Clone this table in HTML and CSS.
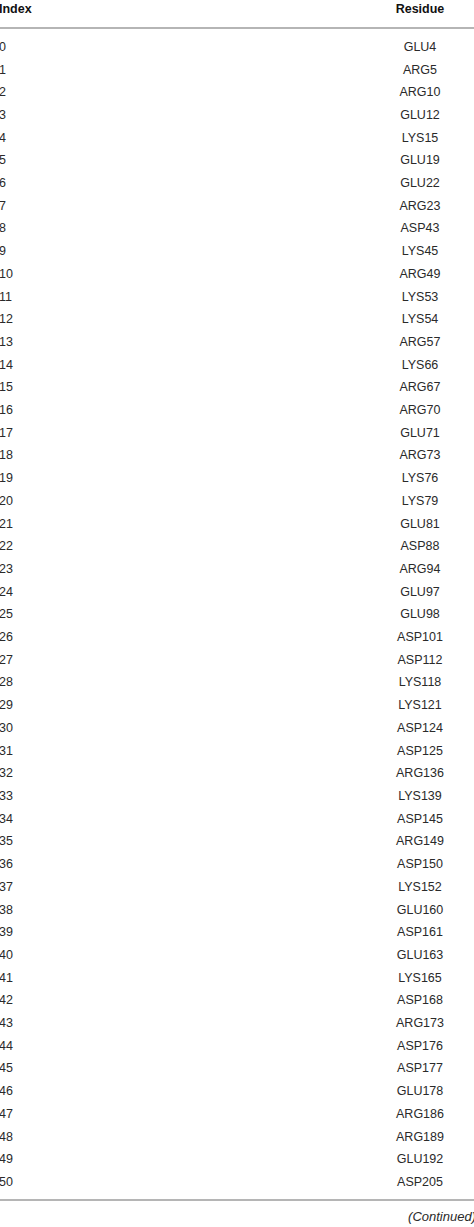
FILE: index.html
```html
<!DOCTYPE html>
<html>
<head>
<meta charset="utf-8">
<link rel="stylesheet" href="styles.css">
</head>
<body>
<div class="page">
  <div class="head">
    <div class="c-index">Index</div>
    <div class="c-res">Residue</div>
  </div>
  <div class="body" id="rows">
    <div class="row"><div class="c-index">0</div><div class="c-res">GLU4</div></div>
    <div class="row"><div class="c-index">1</div><div class="c-res">ARG5</div></div>
    <div class="row"><div class="c-index">2</div><div class="c-res">ARG10</div></div>
    <div class="row"><div class="c-index">3</div><div class="c-res">GLU12</div></div>
    <div class="row"><div class="c-index">4</div><div class="c-res">LYS15</div></div>
    <div class="row"><div class="c-index">5</div><div class="c-res">GLU19</div></div>
    <div class="row"><div class="c-index">6</div><div class="c-res">GLU22</div></div>
    <div class="row"><div class="c-index">7</div><div class="c-res">ARG23</div></div>
    <div class="row"><div class="c-index">8</div><div class="c-res">ASP43</div></div>
    <div class="row"><div class="c-index">9</div><div class="c-res">LYS45</div></div>
    <div class="row"><div class="c-index">10</div><div class="c-res">ARG49</div></div>
    <div class="row"><div class="c-index">11</div><div class="c-res">LYS53</div></div>
    <div class="row"><div class="c-index">12</div><div class="c-res">LYS54</div></div>
    <div class="row"><div class="c-index">13</div><div class="c-res">ARG57</div></div>
    <div class="row"><div class="c-index">14</div><div class="c-res">LYS66</div></div>
    <div class="row"><div class="c-index">15</div><div class="c-res">ARG67</div></div>
    <div class="row"><div class="c-index">16</div><div class="c-res">ARG70</div></div>
    <div class="row"><div class="c-index">17</div><div class="c-res">GLU71</div></div>
    <div class="row"><div class="c-index">18</div><div class="c-res">ARG73</div></div>
    <div class="row"><div class="c-index">19</div><div class="c-res">LYS76</div></div>
    <div class="row"><div class="c-index">20</div><div class="c-res">LYS79</div></div>
    <div class="row"><div class="c-index">21</div><div class="c-res">GLU81</div></div>
    <div class="row"><div class="c-index">22</div><div class="c-res">ASP88</div></div>
    <div class="row"><div class="c-index">23</div><div class="c-res">ARG94</div></div>
    <div class="row"><div class="c-index">24</div><div class="c-res">GLU97</div></div>
    <div class="row"><div class="c-index">25</div><div class="c-res">GLU98</div></div>
    <div class="row"><div class="c-index">26</div><div class="c-res">ASP101</div></div>
    <div class="row"><div class="c-index">27</div><div class="c-res">ASP112</div></div>
    <div class="row"><div class="c-index">28</div><div class="c-res">LYS118</div></div>
    <div class="row"><div class="c-index">29</div><div class="c-res">LYS121</div></div>
    <div class="row"><div class="c-index">30</div><div class="c-res">ASP124</div></div>
    <div class="row"><div class="c-index">31</div><div class="c-res">ASP125</div></div>
    <div class="row"><div class="c-index">32</div><div class="c-res">ARG136</div></div>
    <div class="row"><div class="c-index">33</div><div class="c-res">LYS139</div></div>
    <div class="row"><div class="c-index">34</div><div class="c-res">ASP145</div></div>
    <div class="row"><div class="c-index">35</div><div class="c-res">ARG149</div></div>
    <div class="row"><div class="c-index">36</div><div class="c-res">ASP150</div></div>
    <div class="row"><div class="c-index">37</div><div class="c-res">LYS152</div></div>
    <div class="row"><div class="c-index">38</div><div class="c-res">GLU160</div></div>
    <div class="row"><div class="c-index">39</div><div class="c-res">ASP161</div></div>
    <div class="row"><div class="c-index">40</div><div class="c-res">GLU163</div></div>
    <div class="row"><div class="c-index">41</div><div class="c-res">LYS165</div></div>
    <div class="row"><div class="c-index">42</div><div class="c-res">ASP168</div></div>
    <div class="row"><div class="c-index">43</div><div class="c-res">ARG173</div></div>
    <div class="row"><div class="c-index">44</div><div class="c-res">ASP176</div></div>
    <div class="row"><div class="c-index">45</div><div class="c-res">ASP177</div></div>
    <div class="row"><div class="c-index">46</div><div class="c-res">GLU178</div></div>
    <div class="row"><div class="c-index">47</div><div class="c-res">ARG186</div></div>
    <div class="row"><div class="c-index">48</div><div class="c-res">ARG189</div></div>
    <div class="row"><div class="c-index">49</div><div class="c-res">GLU192</div></div>
    <div class="row"><div class="c-index">50</div><div class="c-res">ASP205</div></div>
  </div>
  <div class="foot">(Continued)</div>
</div>
</body>
</html>
```

FILE: styles.css
```css
html, body {
  margin: 0;
  padding: 0;
  background: #ffffff;
}
.page {
  width: 474px;
  height: 1227px;
  overflow: hidden;
  font-family: "Liberation Sans", Arial, sans-serif;
  font-size: 12.5px;
  color: #2a2a2a;
}
.head, .row {
  display: grid;
  grid-template-columns: 1fr 108px;
  margin-left: -1px;
}
.head {
  font-weight: bold;
  color: #111;
  font-size: 12.5px;
  line-height: 18px;
  box-sizing: border-box;
  border-bottom: 2px solid #b5b5b5;
  height: 29px;
}
.c-res {
  text-align: center;
}
.body {
  padding-top: 6.8px;
  padding-bottom: 5.5px;
  border-bottom: 2px solid #b5b5b5;
}
.row {
  height: 22.71px;
  line-height: 22.71px;
}
.foot {
  font-style: italic;
  font-size: 13px;
  text-align: right;
  margin-right: -2px;
  padding-top: 8px;
  line-height: 16px;
  color: #2a2a2a;
}
```
